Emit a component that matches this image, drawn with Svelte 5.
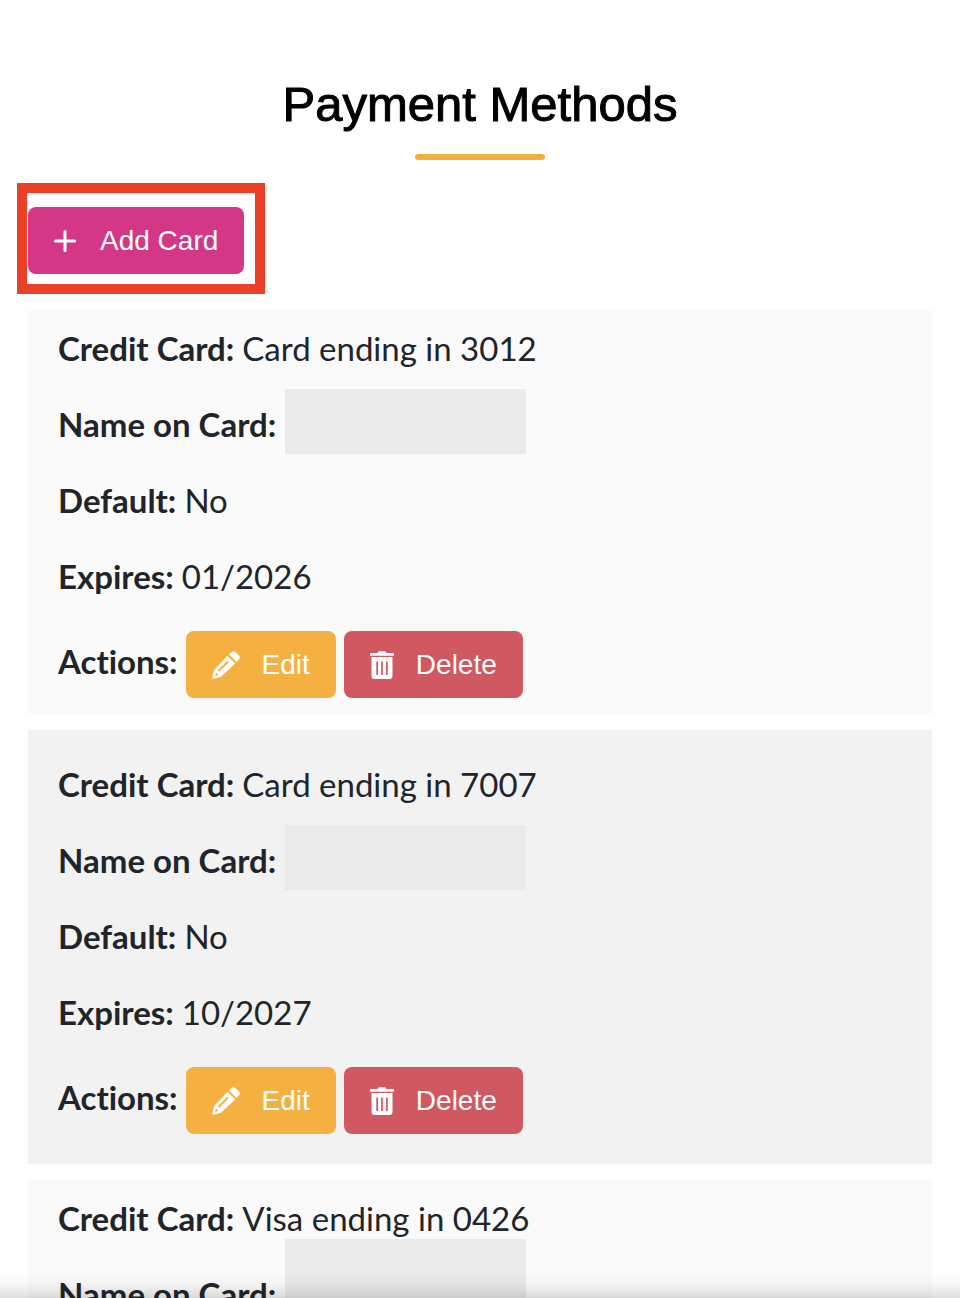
<script>
  const cards = [
    { title: 'Card ending in 3012', isDefault: 'No', expires: '01/2026', editable: true },
    { title: 'Card ending in 7007', isDefault: 'No', expires: '10/2027', editable: true },
    { title: 'Visa ending in 0426', raised: true }
  ];
</script>

<main class="page">
  <h1>Payment Methods</h1>
  <div class="toolbar">
    <button class="btn add" type="button">
      <svg class="plus" viewBox="0 0 22 22" aria-hidden="true"><path d="M11 1.500V20.500M1.500 11H20.500" /></svg>
      Add Card
    </button>
    <span class="highlight"></span>
  </div>

  <section class="cards">
    {#each cards as card}
      <article class="card">
        <p class="row"><strong>Credit Card:</strong> {card.title}</p>
        <p class="row"><strong>Name on Card:</strong><span class="mask" class:raised={card.raised}></span></p>
        {#if card.isDefault}
          <p class="row"><strong>Default:</strong> {card.isDefault}</p>
          <p class="row"><strong>Expires:</strong> {card.expires}</p>
        {/if}
        {#if card.editable}
          <div class="row actions">
            <strong>Actions:</strong>
            <button class="btn edit" type="button">
              <svg class="icon" viewBox="0 0 28 28" aria-hidden="true">
                <path d="M15.500 4.800L23.200 12.500L9.500 25.300Q8.900 25.900 8 26.100L1.400 27.700Q.100 27.900.300 26.600L1.900 20Q2.100 19.100 2.700 18.500Z" />
                <path d="M17 3.500L19.700.900Q21.500-.600 23.400 1L27 4.600Q28.600 6.500 27.100 8.300L24.500 11Z" />
                <path class="cut" d="M7 19.500L15.500 11" />
                <path class="hole" d="M3.900 21.600L6.400 24.100L3.100 24.900Z" />
              </svg>
              Edit
            </button>
            <button class="btn delete" type="button">
              <svg class="icon trash" viewBox="2 0 24 28" aria-hidden="true">
                <path fill-rule="evenodd" d="M3.500 6H24.500V25Q24.500 28 21.500 28H6.500Q3.500 28 3.500 25ZM8.300 10.500V24H10V10.500ZM13.150 10.500V24H14.850V10.500ZM18 10.500V24H19.700V10.500Z" />
                <path d="M2 4.800V3.300Q2 2 3.300 2H9.500Q10 .200 11.500.200H16.500Q18 .200 18.500 2H24.700Q26 2 26 3.300V4.800Z" />
              </svg>
              Delete
            </button>
          </div>
        {/if}
      </article>
    {/each}
  </section>
  <div class="edge"></div>
</main>

<style>
  :global(body) { margin: 0; background: #fff; }
  .page {
    box-sizing: border-box;
    height: 100vh;
    overflow: hidden;
    padding: 74px 28px 0;
    color: #212529;
    font: 33px/48px Lato, sans-serif;
    font-variant-ligatures: none;
  }
  h1 {
    margin: 0;
    color: #000;
    font: 400 49px/60px "Liberation Sans", Arial, sans-serif;
    text-align: center;
    -webkit-text-stroke: 1px #000;
  }
  h1::after {
    content: "";
    display: block;
    width: 130px;
    height: 6px;
    margin: 20px auto 0;
    border-radius: 3px;
    background: #f3ae3d;
  }
  .toolbar { position: relative; width: fit-content; margin: 47px 0 36px; }
  .highlight {
    position: absolute;
    inset: -24px -21px -20px -11px;
    border: 10px solid #eb4025;
    pointer-events: none;
  }
  .btn {
    display: flex;
    align-items: center;
    gap: 22px;
    box-sizing: border-box;
    height: 67px;
    padding: 0 26px;
    border: 0;
    border-radius: 8px;
    color: #fff;
    font: 28px/42px "Liberation Sans", Arial, sans-serif;
    cursor: pointer;
  }
  .add { gap: 24px; background: #d43785; }
  .edit { background: #f4b142; }
  .delete { background: #d05860; }
  .plus { width: 22px; height: 22px; fill: none; stroke: #fff; stroke-width: 3; stroke-linecap: round; }
  .icon { width: 28px; height: 28px; fill: #fff; }
  .trash { width: 24px; }
  .cut { fill: none; stroke: #f4b142; stroke-width: 2; stroke-linecap: round; }
  .hole { fill: #f4b142; }
  .cards { display: grid; gap: 16px; }
  .card {
    display: flex;
    flex-direction: column;
    gap: 28px;
    padding: 14px 30px 16px;
    background: #fafafa;
  }
  .card:nth-child(even) { padding: 30px; background: #f2f2f2; }
  .row { position: relative; display: flex; gap: 8px; margin: 0; }
  .row strong { font-weight: 700; }
  .actions { margin-top: 3px; }
  .actions strong { line-height: 60px; }
  .mask {
    position: absolute;
    top: -11px;
    left: 227px;
    width: 241px;
    height: 65px;
    background: #eaeaea;
  }
  .raised { top: -31px; }
  .edge {
    position: fixed;
    inset: auto 0 0;
    height: 26px;
    background: linear-gradient(transparent, rgb(0 0 0 / 3%) 50%, rgb(0 0 0 / 13%));
    pointer-events: none;
  }
</style>
